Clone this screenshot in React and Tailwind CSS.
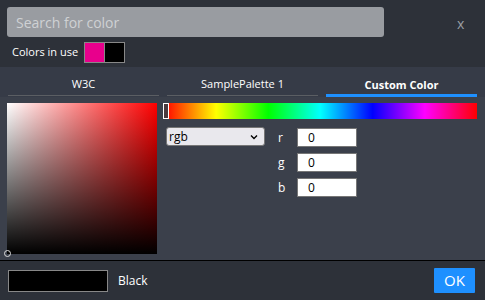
import React from "react";

export default function App() {
  const font = { fontFamily: '"Open Sans", "Noto Sans", sans-serif' };
  return (
    <div className="w-[485px] h-[300px] flex flex-col bg-[#3b404b] text-white overflow-hidden" style={font}>
      {/* header */}
      <div className="h-[67px] bg-[#2d3139] flex flex-col px-[7px] pt-[7px]">
        <div className="flex items-center">
          <input
            className="w-[377px] h-[30px] rounded-[3px] bg-[#999ca1] px-[9px] text-[14px] text-white placeholder:text-[#cfd1d4] outline-none"
            placeholder="Search for color"
            style={font}
          />
          <span className="ml-[73px] mt-[2px] text-[14px] text-[#9a9ea5]">x</span>
        </div>
        <div className="flex items-center mt-[5px] pl-[5px]">
          <span className="text-[11px] text-white">Colors in use</span>
          <div className="ml-[6px] flex border border-[#888] h-[21px]">
            <div className="w-[19px] bg-[#e8008c]" />
            <div className="w-[1px] bg-[#888]" />
            <div className="w-[19px] bg-black" />
          </div>
        </div>
      </div>
      {/* tabs */}
      <div className="h-[30px] bg-[#363b47] grid grid-cols-3 gap-[8px] px-[8px]">
        <div className="flex flex-col items-center justify-end">
          <span className="text-[11px] leading-[16px] mb-[3px]">W3C</span>
          <div className="w-full h-[1px] bg-[#5b5e63] mb-[1px]" />
        </div>
        <div className="flex flex-col items-center justify-end">
          <span className="text-[11px] leading-[16px] mb-[3px]">SamplePalette 1</span>
          <div className="w-full h-[1px] bg-[#5b5e63] mb-[1px]" />
        </div>
        <div className="flex flex-col items-center justify-end">
          <span className="text-[11px] leading-[16px] mb-[1px] font-bold">Custom Color</span>
          <div className="w-full h-[3px] bg-[#1e90ff]" />
        </div>
      </div>
      {/* body */}
      <div className="flex-1 flex pl-[7px] pt-[6px]">
        <div className="relative w-[150px] h-[151px] bg-[linear-gradient(to_right,#ffffff,#ff0000)]">
          <div className="absolute inset-0 bg-[linear-gradient(to_bottom,rgba(0,0,0,0),#000000)]" />
          <div className="absolute left-[-3px] bottom-[-3px] w-[7px] h-[7px] rounded-full border border-[#ddd]" />
        </div>
        <div className="ml-[7px] flex flex-col w-[313px]">
          <div className="relative h-[16px] bg-[linear-gradient(to_right,#ff0000,#ffff00,#00ff00,#00ffff,#0000ff,#ff00ff,#ff0000)]">
            <div className="absolute left-[-1px] top-0 w-[6px] h-[16px] bg-[#4a3a3e] border border-white" />
          </div>
          <div className="flex mt-[8px]">
            <div className="ml-[2px] w-[99px] h-[19px] rounded-[3px] bg-[#e9e8ed] border border-[#767676] flex items-center justify-between px-[2px] text-black text-[12px]">
              <span>rgb</span>
              <svg width="10" height="10" viewBox="0 0 10 10" className="mr-[3px]">
                <path d="M2 3.5 L5 6.5 L8 3.5" fill="none" stroke="#000" strokeWidth="1.4" />
              </svg>
            </div>
            <div className="ml-[12px] flex flex-col gap-[6px] mt-[1px]">
              {["r", "g", "b"].map((l) => (
                <div key={l} className="flex items-center">
                  <span className="w-[20px] text-[12px] pl-[1px]">{l}</span>
                  <div className="w-[60px] h-[19px] bg-white border border-[#767676] text-black text-[12px] leading-[17px] pl-[10px]">0</div>
                </div>
              ))}
            </div>
          </div>
        </div>
      </div>
      {/* footer */}
      <div className="h-[40px] border-t border-black bg-[#2d3139] flex items-center px-[8px]">
        <div className="w-[100px] h-[22px] bg-black border border-[#888]" />
        <span className="ml-[10px] text-[12px]">Black</span>
        <button className="ml-auto mr-[2px] w-[41px] h-[25px] bg-[#1e90ff] text-white text-[15px] rounded-[1px]" style={font}>OK</button>
      </div>
    </div>
  );
}
